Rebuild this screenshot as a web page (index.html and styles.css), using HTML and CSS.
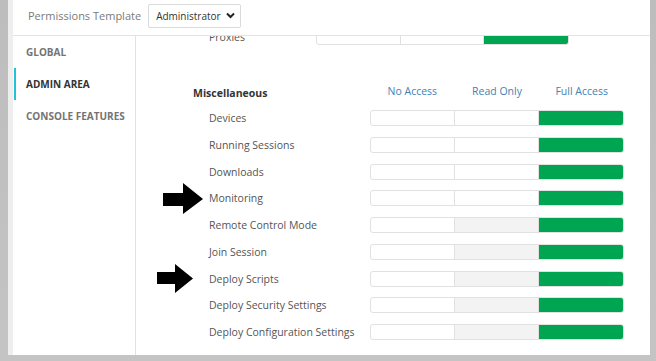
FILE: index.html
```html
<!DOCTYPE html>
<html>
<head>
<meta charset="utf-8">
<link rel="stylesheet" href="styles.css">
</head>
<body>
<div class="frame">
  <div class="panel">
    <div class="header">
      <span class="tpl-label">Permissions Template</span>
      <div class="select">
        <span>Administrator</span>
        <svg class="chev" width="9" height="7" viewBox="0 0 9 7"><path d="M1 1.5 L4.5 5 L8 1.5" fill="none" stroke="#222" stroke-width="2"/></svg>
      </div>
    </div>
    <div class="body">
      <nav class="sidebar">
        <div class="nav-item">GLOBAL</div>
        <div class="nav-item active">ADMIN AREA</div>
        <div class="nav-item">CONSOLE FEATURES</div>
      </nav>
      <main class="content">
        <div class="scroll">
          <section class="group proxies">
            <div class="row">
              <span class="label">Proxies</span>
              <div class="bar"><span class="seg"></span><span class="seg"></span><span class="seg on"></span></div>
            </div>
          </section>
          <section class="group misc">
            <div class="row head">
              <span class="title">Miscellaneous</span>
              <div class="cols"><span>No Access</span><span>Read Only</span><span>Full Access</span></div>
            </div>
            <div class="row"><span class="label">Devices</span><div class="bar"><span class="seg"></span><span class="seg"></span><span class="seg on"></span></div></div>
            <div class="row"><span class="label">Running Sessions</span><div class="bar"><span class="seg"></span><span class="seg"></span><span class="seg on"></span></div></div>
            <div class="row"><span class="label">Downloads</span><div class="bar"><span class="seg"></span><span class="seg"></span><span class="seg on"></span></div></div>
            <div class="row"><span class="label">Monitoring</span><div class="bar"><span class="seg"></span><span class="seg"></span><span class="seg on"></span></div></div>
            <div class="row"><span class="label">Remote Control Mode</span><div class="bar"><span class="seg"></span><span class="seg grey"></span><span class="seg on"></span></div></div>
            <div class="row"><span class="label">Join Session</span><div class="bar"><span class="seg"></span><span class="seg grey"></span><span class="seg on"></span></div></div>
            <div class="row"><span class="label">Deploy Scripts</span><div class="bar"><span class="seg"></span><span class="seg grey"></span><span class="seg on"></span></div></div>
            <div class="row"><span class="label">Deploy Security Settings</span><div class="bar"><span class="seg"></span><span class="seg grey"></span><span class="seg on"></span></div></div>
            <div class="row"><span class="label">Deploy Configuration Settings</span><div class="bar"><span class="seg"></span><span class="seg grey"></span><span class="seg on"></span></div></div>
          </section>
        </div>
        <svg class="arrow a1" width="40" height="31" viewBox="0 0 40 31"><path d="M0 10 H20 V0 L40 16 L20 31 V23 H0 Z" fill="#000"/></svg>
        <svg class="arrow a2" width="36" height="29" viewBox="0 0 36 29"><path d="M0 8 H18 V0 L36 14.5 L18 29 V20 H0 Z" fill="#000"/></svg>
      </main>
    </div>
  </div>
</div>
</body>
</html>
```
FILE: styles.css
```css
* { box-sizing: border-box; }
html, body { margin: 0; padding: 0; }
body {
  width: 656px;
  height: 361px;
  overflow: hidden;
  background: linear-gradient(#bdbdbd, #c4c4c4);
  font-family: "Open Sans", "DejaVu Sans", sans-serif;
}
.frame {
  padding-left: 8px;
  padding-right: 6px;
  height: 355px;
}
.panel {
  height: 355px;
  background: #fff;
  border-left: 5px solid #eeeeee;
  display: flex;
  flex-direction: column;
}
.header {
  height: 36px;
  flex: none;
  border-bottom: 1px solid #e4e4e4;
  display: flex;
  align-items: center;
  padding-left: 15px;
  padding-bottom: 4px;
}
.tpl-label {
  font-size: 11px;
  color: #7a7a7a;
  margin-right: 7px;
}
.select {
  width: 93px;
  height: 24px;
  border: 1px solid #dadada;
  border-radius: 2px;
  display: flex;
  align-items: center;
  justify-content: space-between;
  padding: 0 5px 0 7px;
  font-size: 10px;
  color: #333;
}
.chev { display: block; }
.body {
  flex: 1;
  display: flex;
  min-height: 0;
}
.sidebar {
  width: 123px;
  flex: none;
  border-right: 1px solid #e2e2e2;
  padding-left: 1px;
}
.nav-item {
  height: 32px;
  display: flex;
  align-items: center;
  padding-left: 10px;
  font-size: 10px;
  font-weight: 700;
  color: #747474;
  border-left: 2px solid transparent;
}
.nav-item.active {
  color: #333;
  border-left-color: #22c3d6;
}
.content {
  flex: 1;
  position: relative;
  overflow: hidden;
}
.scroll {
  margin-top: -12px;
  padding-left: 57px;
}
.row {
  display: grid;
  align-items: center;
  height: 26.75px;
  padding-left: 16px;
}
.proxies .row { grid-template-columns: 107px 253px; }
.misc { margin-top: 28px; }
.misc .row { grid-template-columns: 161px 254px; }
.misc .row.head {
  height: 26px;
  padding-left: 0;
  grid-template-columns: 177px 254px;
}
.title {
  font-size: 10.5px;
  font-weight: 700;
  color: #333;
  padding-top: 3px;
}
.cols {
  display: grid;
  grid-template-columns: 1fr 1fr 1fr;
  text-align: center;
  font-size: 10.5px;
  color: #3f82b6;
  padding-bottom: 2px;
}
.label {
  font-size: 10.5px;
  color: #555;
  white-space: nowrap;
}
.bar {
  height: 16px;
  display: grid;
  grid-template-columns: 1fr 1fr 1fr;
  border: 1px solid #e1e1e1;
  border-radius: 3px;
  overflow: hidden;
  background: #fff;
}
.seg { border-right: 1px solid #e1e1e1; }
.seg:last-child { border-right: 0; }
.seg.grey { background: #f3f3f3; }
.seg.on { background: #00a551; }
.arrow { position: absolute; display: block; }
.a1 { left: 27px; top: 147px; }
.a2 { left: 21px; top: 228px; }
```
